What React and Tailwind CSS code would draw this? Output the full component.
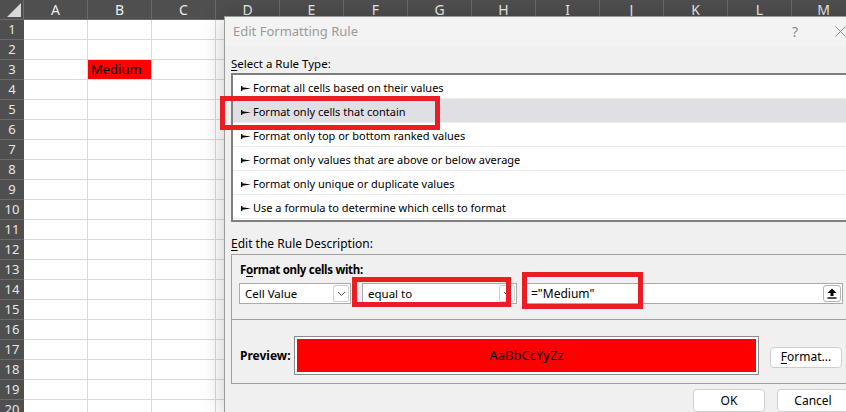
import React from "react";

const COLS = ["A","B","C","D","E","F","G","H","I","J","K","L","M"];
const ROWS = Array.from({ length: 20 }, (_, i) => i + 1);

const RULES = [
  "Format all cells based on their values",
  "Format only cells that contain",
  "Format only top or bottom ranked values",
  "Format only values that are above or below average",
  "Format only unique or duplicate values",
  "Use a formula to determine which cells to format",
];

function RuleGlyph() {
  return (
    <svg width="10" height="7" viewBox="0 0 10 7" className="shrink-0">
      <rect x="0" y="1" width="1.3" height="5" fill="#000" />
      <polygon points="1,2.3 10,3.5 1,4.7" fill="#000" />
    </svg>
  );
}

function Chevron() {
  return (
    <svg width="9" height="6" viewBox="0 0 9 6">
      <polyline points="1,1 4.5,4.5 8,1" fill="none" stroke="#555" strokeWidth="1" />
    </svg>
  );
}

function Combo({ width, label }) {
  return (
    <div
      className="h-[21px] bg-white border border-[#ababab] flex items-center justify-between shrink-0"
      style={{ width }}
    >
      <span className="pl-[5px] text-[11.5px] text-black leading-none">{label}</span>
      <div className="w-[16px] h-[17px] mr-[1px] border border-[#cfcfcf] rounded-[2px] flex items-center justify-center bg-white">
        <Chevron />
      </div>
    </div>
  );
}

export default function App() {
  return (
    <div
      className="relative w-[846px] h-[412px] overflow-hidden bg-white"
      style={{ fontFamily: '"Noto Sans", "Open Sans", sans-serif' }}
    >
      {/* Spreadsheet */}
      <div className="flex flex-col">
        <div className="flex h-[20px] bg-[#4f4f4f]">
          <div className="w-[24px] shrink-0 border-r border-b border-[#6b6b6b] relative">
            <svg width="14" height="14" viewBox="0 0 14 14" className="absolute right-[2px] bottom-[2px]">
              <polygon points="14,0 14,14 0,14" fill="#d9d9d9" />
            </svg>
          </div>
          {COLS.map((c) => (
            <div
              key={c}
              className="w-[64px] shrink-0 border-r border-b border-[#6b6b6b] text-[#ececec] text-[14px] flex items-center justify-center"
            >
              {c}
            </div>
          ))}
        </div>
        {ROWS.map((r) => (
          <div key={r} className="flex h-[20px]">
            <div className="w-[24px] shrink-0 bg-[#4f4f4f] border-b border-[#6b6b6b] text-[#e6e6e6] text-[13px] flex items-center justify-center">
              {r}
            </div>
            {COLS.map((c) => (
              <div
                key={c}
                className={
                  "w-[64px] shrink-0 border-r border-b border-[#dadada] flex items-center " +
                  (r === 3 && c === "B" ? "bg-[#ff0000]" : "")
                }
              >
                {r === 3 && c === "B" ? (
                  <span className="pl-[3px] text-[13px] text-black">Medium</span>
                ) : null}
              </div>
            ))}
          </div>
        ))}
      </div>

      {/* Dialog */}
      <div className="absolute left-[224px] top-[16px] w-[634px] h-[400px] bg-[#f0f0f0] border-l border-t border-[#9a9a9a] shadow-[0_0_22px_rgba(0,0,0,0.22)] flex flex-col">
        <div className="h-[29px] bg-[#f3f3f3] flex items-center justify-between shrink-0">
          <span className="pl-[8px] text-[13px] text-[#9a9a9a]">Edit Formatting Rule</span>
          <div className="flex items-center gap-[37px] pr-[12px] text-[#8a8a8a]">
            <span className="text-[14px]">?</span>
            <svg width="11" height="11" viewBox="0 0 11 11">
              <path d="M0.5 0.5 L10.5 10.5 M10.5 0.5 L0.5 10.5" stroke="#8a8a8a" strokeWidth="1" />
            </svg>
          </div>
        </div>

        <div className="px-[6px] flex flex-col">
          <div className="mt-[10px] h-[16px] leading-[16px] text-[11.5px] text-black">
            <span className="underline underline-offset-2">S</span>elect a Rule Type:
          </div>
          <div className="mt-[1px] border-2 border-[#7f7f7f] bg-white pb-[1px]">
            {RULES.map((t, i) => (
              <div
                key={t}
                className={
                  "h-[24px] pt-[3px] border-b border-[#ececec] flex items-center gap-[2px] pl-[8px] text-[11px] text-black " +
                  (i === 1 ? "bg-[#e0dfe4]" : "")
                }
              >
                <RuleGlyph />
                <span>{t}</span>
              </div>
            ))}
          </div>

          <div className="mt-[14px] h-[16px] leading-[16px] text-[12px] text-black">
            <span className="underline underline-offset-2">E</span>dit the Rule Description:
          </div>
          <div className="mt-[2px] h-[130px] border border-[#a0a0a0] flex flex-col">
            <div className="pl-[8px] pt-[7px] h-[23px] leading-[16px] text-[11.5px] font-bold tracking-[-0.3px] text-black">
              F<span className="underline underline-offset-2">o</span>rmat only cells with:
            </div>
            <div className="mt-[5px] pl-[7px] flex items-center">
              <Combo width={112} label="Cell Value" />
              <div className="w-[11px]" />
              <Combo width={155} label="equal to" />
              <div className="w-[9px]" />
              <div className="h-[21px] w-[317px] bg-white border border-[#ababab] flex items-center justify-between shrink-0">
                <span className="pl-[4px] text-[12px] text-black leading-none">="Medium"</span>
                <div className="w-[18px] h-[17px] mr-[1px] border border-[#b5b5b5] rounded-[3px] bg-white flex items-center justify-center">
                  <svg width="10" height="11" viewBox="0 0 10 11">
                    <polygon points="5,0.5 9.5,5 6.5,5 6.5,8 3.5,8 3.5,5 0.5,5" fill="#000" />
                    <rect x="0.5" y="9.3" width="9" height="1.4" fill="#000" />
                  </svg>
                </div>
              </div>
            </div>
            <div className="mt-[15px] border-t border-[#a0a0a0]" />
            <div className="flex items-center pl-[8px] mt-[16px]">
              <span className="w-[54px] text-[12px] font-bold text-black">Preview:</span>
              <div className="w-[465px] h-[39px] border border-[#8a8a8a] bg-white p-[2px] shrink-0">
                <div className="w-full h-full bg-[#ff0000] flex items-center justify-center text-[13px] text-black">
                  AaBbCcYyZz
                </div>
              </div>
              <div className="ml-[11px] mt-[3px] w-[72px] h-[21px] bg-white border border-[#cfcfcf] rounded-[4px] flex items-center justify-center text-[12px] text-black">
                <span><span className="underline underline-offset-2">F</span>ormat...</span>
              </div>
            </div>
          </div>

          <div className="mt-[5px] flex pl-[462px] gap-[12px]">
            <div className="w-[72px] h-[23px] bg-white border border-[#cfcfcf] rounded-[4px] flex items-center justify-center text-[12px] text-black">
              OK
            </div>
            <div className="w-[72px] h-[23px] bg-white border border-[#cfcfcf] rounded-[4px] flex items-center justify-center text-[12px] text-black">
              Cancel
            </div>
          </div>
        </div>
      </div>

      {/* Red annotation boxes */}
      <div className="absolute left-[220px] top-[96px] w-[220px] h-[34px] border-[5px] border-[#ec1c24]" />
      <div className="absolute left-[352px] top-[277px] w-[159px] h-[30px] border-[5px] border-[#ec1c24]" />
      <div className="absolute left-[522px] top-[272px] w-[121px] h-[37px] border-[5px] border-[#ec1c24]" />
    </div>
  );
}
